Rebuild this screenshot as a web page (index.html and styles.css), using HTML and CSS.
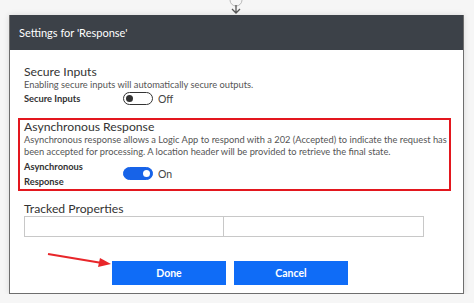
FILE: index.html
```html
<!DOCTYPE html>
<html lang="en">
<head>
    <meta charset="UTF-8">
    <meta name="viewport" content="width=device-width, initial-scale=1.0">
    <title>Settings for 'Response'</title>
    <link rel="stylesheet" href="styles.css">
</head>
<body>
    <div class="connector">
        <svg width="20" height="15" viewBox="0 0 20 15">
            <path d="M4 0 A6 6 0 0 0 16 0" fill="none" stroke="#b9b9b9" stroke-width="1"/>
            <path d="M10 5 V13 M6 9 L10 13 L14 9" fill="none" stroke="#555" stroke-width="1.3"/>
        </svg>
    </div>

    <div class="dialog">
        <div class="dialog-header">Settings for 'Response'</div>

        <div class="dialog-body">
            <section class="setting">
                <div class="setting-title">Secure Inputs</div>
                <div class="setting-desc">Enabling secure inputs will automatically secure outputs.</div>
                <div class="setting-row">
                    <label class="setting-label">Secure Inputs</label>
                    <span class="toggle"><span class="knob"></span></span>
                    <span class="toggle-text">Off</span>
                </div>
            </section>

            <section class="setting highlight">
                <div class="setting-title">Asynchronous Response</div>
                <div class="setting-desc">Asynchronous response allows a Logic App to respond with a 202 (Accepted) to indicate the request has been accepted for processing. A location header will be provided to retrieve the final state.</div>
                <div class="setting-row">
                    <label class="setting-label two-line">Asynchronous Response</label>
                    <span class="toggle on"><span class="knob"></span></span>
                    <span class="toggle-text">On</span>
                </div>
            </section>

            <section class="setting tracked">
                <div class="setting-title">Tracked Properties</div>
                <div class="input-row">
                    <input type="text">
                    <input type="text">
                </div>
            </section>

            <div class="actions">
                <svg class="pointer" width="66" height="14" viewBox="0 0 66 14">
                    <path d="M1 1 L55 10" stroke="#e8262a" stroke-width="2" fill="none"/>
                    <path d="M53 5 L64 11 L51 14 Z" fill="#e8262a"/>
                </svg>
                <button class="btn">Done</button>
                <button class="btn">Cancel</button>
            </div>
        </div>
    </div>
</body>
</html>
```

FILE: styles.css
```css
body {
    margin: 0;
    background-color: #f6f6f6;
    font-family: Lato, "Open Sans", sans-serif;
    color: #333;
}
.connector {
    height: 15px;
    padding-left: 226px;
}
.connector svg {
    display: block;
}
.dialog {
    margin-left: 9px;
    width: 453px;
    height: 278px;
    background-color: #fff;
    border: 1px solid #6e6e6e;
    border-top: none;
    box-shadow: 0 0 6px rgba(0, 0, 0, 0.12);
    display: flex;
    flex-direction: column;
}
.dialog-header {
    height: 35px;
    background-color: #3c4148;
    color: #fff;
    font-size: 11px;
    line-height: 35px;
    padding-left: 9px;
}
.dialog-body {
    padding: 15px 0 0 14px;
}
.setting-title {
    font-size: 12.2px;
    line-height: 14px;
    color: #333;
}
.setting-desc {
    font-size: 9.3px;
    line-height: 12.5px;
    color: #555;
}
.setting-row {
    display: flex;
    align-items: center;
}
.setting-label {
    width: 99px;
    font-size: 9.3px;
    font-weight: 700;
    line-height: 14px;
    color: #333;
}
.setting-label.two-line {
    width: 70px;
    margin-right: 29px;
    line-height: 15px;
}
.toggle {
    box-sizing: border-box;
    width: 30px;
    height: 13px;
    border: 1px solid #333;
    border-radius: 7px;
    display: flex;
    align-items: center;
    padding: 0 2px;
}
.toggle .knob {
    width: 7px;
    height: 7px;
    border-radius: 50%;
    background-color: #333;
}
.toggle.on {
    background-color: #1763e8;
    border-color: #1763e8;
    justify-content: flex-end;
}
.toggle.on .knob {
    background-color: #fff;
}
.toggle-text {
    margin-left: 5px;
    font-size: 10.5px;
    color: #444;
}
.highlight {
    margin: 12px 0 0 -6px;
    width: 425px;
    padding: 0 0 0 4px;
    border: 2px solid #e3171e;
}
.tracked {
    margin-top: 11.5px;
}
.input-row {
    display: flex;
}
.input-row input {
    box-sizing: border-box;
    width: 200px;
    height: 21px;
    border: 1px solid #c8c8c8;
    margin: 0;
    padding: 0;
}
.input-row input + input {
    border-left: none;
}
.actions {
    position: relative;
    display: flex;
    gap: 8px;
    margin-top: 24px;
    padding-left: 88px;
}
.btn {
    width: 114px;
    height: 24px;
    background-color: #0f6cf7;
    color: #fff;
    border: none;
    font-family: Lato, sans-serif;
    font-size: 10.5px;
    font-weight: 700;
    cursor: pointer;
}
.pointer {
    position: absolute;
    left: 23px;
    top: -8px;
}
```
